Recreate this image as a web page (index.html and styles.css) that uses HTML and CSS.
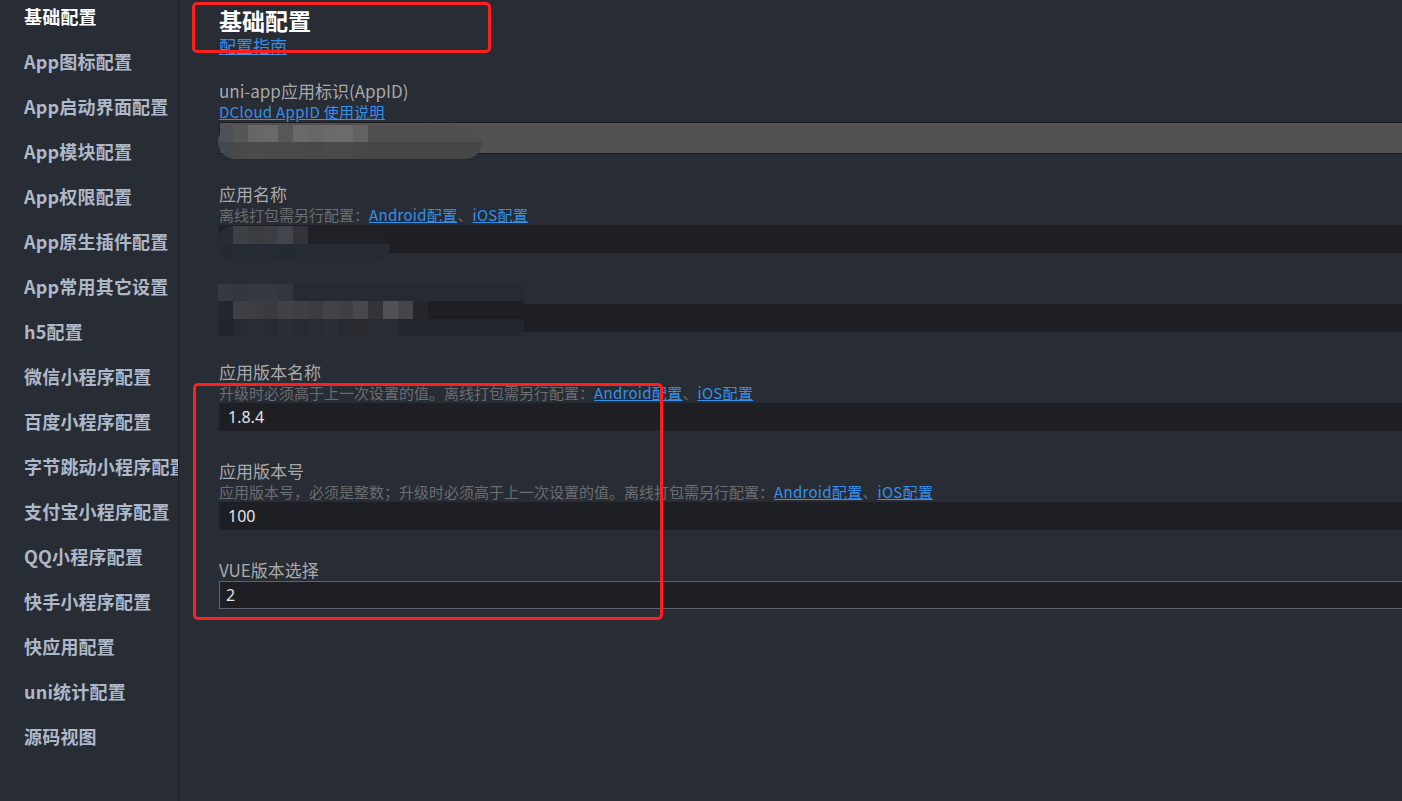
FILE: index.html
```html
<!DOCTYPE html>
<html lang="zh-CN">
<head>
<meta charset="utf-8">
<title>基础配置</title>
<link rel="stylesheet" href="styles.css">
</head>
<body>
<div class="app">
  <nav class="sidebar">
    <ul class="menu">
      <li class="item active">基础配置</li>
      <li class="item">App图标配置</li>
      <li class="item">App启动界面配置</li>
      <li class="item">App模块配置</li>
      <li class="item">App权限配置</li>
      <li class="item">App原生插件配置</li>
      <li class="item">App常用其它设置</li>
      <li class="item">h5配置</li>
      <li class="item">微信小程序配置</li>
      <li class="item">百度小程序配置</li>
      <li class="item">字节跳动小程序配置</li>
      <li class="item">支付宝小程序配置</li>
      <li class="item">QQ小程序配置</li>
      <li class="item">快手小程序配置</li>
      <li class="item">快应用配置</li>
      <li class="item">uni统计配置</li>
      <li class="item">源码视图</li>
    </ul>
  </nav>
  <main class="content">
    <h1 class="title">基础配置</h1>
    <a class="guide" href="#">配置指南</a>

    <div class="field">
      <div class="label">uni-app应用标识(AppID)</div>
      <div class="sub"><a class="link" href="#">DCloud AppID 使用说明</a></div>
      <div class="input input-appid"></div>
    </div>

    <div class="field">
      <div class="label">应用名称</div>
      <div class="sub">离线打包需另行配置：<a class="link" href="#">Android配置</a>、<a class="link" href="#">iOS配置</a></div>
      <div class="input"></div>
    </div>

    <div class="field">
      <div class="label label-desc">应用描述</div>
      <div class="input"></div>
    </div>

    <div class="field">
      <div class="label">应用版本名称</div>
      <div class="sub">升级时必须高于上一次设置的值。离线打包需另行配置：<a class="link" href="#">Android配置</a>、<a class="link" href="#">iOS配置</a></div>
      <div class="input">1.8.4</div>
    </div>

    <div class="field">
      <div class="label">应用版本号</div>
      <div class="sub">应用版本号，必须是整数；升级时必须高于上一次设置的值。离线打包需另行配置：<a class="link" href="#">Android配置</a>、<a class="link" href="#">iOS配置</a></div>
      <div class="input">100</div>
    </div>

    <div class="field">
      <div class="label">VUE版本选择</div>
      <div class="input input-select">2</div>
    </div>
  </main>

  <!-- blur mosaics over private values -->
  <div class="mosaic mosaic-1">
    <div class="row">
      <span class="c" style="background:#4b5059"></span><span class="c" style="background:#575656"></span><span class="c" style="background:#676565"></span><span class="c" style="background:#6b6967"></span><span class="c" style="background:#585656"></span><span class="c" style="background:#6a6868"></span><span class="c" style="background:#676767"></span><span class="c" style="background:#6a6a6a"></span><span class="c" style="background:#6d6b69"></span><span class="c" style="background:#636161"></span><span class="c wide" style="background:#504e4e"></span>
    </div>
    <div class="row">
      <span class="c" style="background:#434750"></span><span class="c" style="background:#4a4949"></span><span class="c" style="background:#4c4b4b"></span><span class="c" style="background:#4a4a4a"></span><span class="c" style="background:#4b4a4a"></span><span class="c" style="background:#4a4949"></span><span class="c" style="background:#484848"></span><span class="c" style="background:#4a4a4a"></span><span class="c" style="background:#4a4949"></span><span class="c" style="background:#484747"></span><span class="c wide" style="background:#474646"></span>
    </div>
  </div>

  <div class="mosaic mosaic-2">
    <div class="row">
      <span class="c" style="background:#272b33"></span><span class="c" style="background:#3e4047"></span><span class="c" style="background:#3b3c40"></span><span class="c" style="background:#3d3e42"></span><span class="c" style="background:#43454c"></span><span class="c" style="background:#333438"></span><span class="c wide" style="background:#1f2127"></span>
    </div>
    <div class="row">
      <span class="c" style="background:#252931"></span><span class="c" style="background:#262a32"></span><span class="c" style="background:#262a32"></span><span class="c" style="background:#262a32"></span><span class="c" style="background:#252931"></span><span class="c" style="background:#262a32"></span><span class="c wide" style="background:#262a32"></span>
    </div>
  </div>

  <div class="mosaic mosaic-3">
    <div class="row">
      <span class="c" style="background:#363941"></span><span class="c" style="background:#33363e"></span><span class="c" style="background:#363941"></span><span class="c" style="background:#363941"></span><span class="c" style="background:#33363e"></span><span class="c wide" style="background:#262a32"></span>
    </div>
    <div class="row">
      <span class="c" style="background:#22262e"></span><span class="c" style="background:#3f4045"></span><span class="c" style="background:#3d3e43"></span><span class="c" style="background:#3a3b40"></span><span class="c" style="background:#414247"></span><span class="c" style="background:#3f4045"></span><span class="c" style="background:#3b3c41"></span><span class="c" style="background:#424348"></span><span class="c" style="background:#3f4045"></span><span class="c" style="background:#47484c"></span><span class="c" style="background:#333438"></span><span class="c" style="background:#505155"></span><span class="c" style="background:#45464b"></span><span class="c" style="background:#25262a"></span><span class="c wide" style="background:#1e1f24"></span>
    </div>
    <div class="row">
      <span class="c" style="background:#22252c"></span><span class="c" style="background:#262a32"></span><span class="c" style="background:#282c34"></span><span class="c" style="background:#262a32"></span><span class="c" style="background:#2a2e36"></span><span class="c" style="background:#262a32"></span><span class="c" style="background:#282c34"></span><span class="c" style="background:#2a2e36"></span><span class="c" style="background:#262a31"></span><span class="c" style="background:#2a2a2e"></span><span class="c" style="background:#282c34"></span><span class="c" style="background:#282c34"></span><span class="c" style="background:#22262e"></span><span class="c" style="background:#22262e"></span><span class="c wide" style="background:#22262e"></span>
    </div>
  </div>

  <!-- annotation boxes -->
  <div class="mark mark-title"></div>
  <div class="mark mark-version"></div>
</div>
</body>
</html>
```

FILE: styles.css
```css
* {
  box-sizing: border-box;
}

html, body {
  margin: 0;
  padding: 0;
  background: #282c34;
  overflow: hidden;
}

body {
  font-family: "Microsoft YaHei", "Noto Sans CJK SC", "Noto Sans", sans-serif;
}

.app {
  position: relative;
  display: flex;
  width: 1402px;
  height: 801px;
  background: #282c34;
  overflow: hidden;
}

/* ---------- sidebar ---------- */
.sidebar {
  flex: 0 0 179px;
  width: 179px;
  height: 100%;
  border-right: 1px solid #1c1f25;
  overflow: hidden;
}

.menu {
  list-style: none;
  margin: -6px 0 0;
  padding: 0;
}

.item {
  height: 45px;
  line-height: 45px;
  padding-left: 24px;
  font-size: 18px;
  font-weight: bold;
  letter-spacing: 0.2px;
  color: #aeb8c8;
  white-space: nowrap;
}

.item.active {
  color: #ffffff;
}

/* ---------- content ---------- */
.content {
  flex: 1 1 auto;
  min-width: 0;
  padding: 6px 0 0 40px;
}

.title {
  margin: 0;
  font-size: 23px;
  line-height: 28px;
  font-weight: bold;
  color: #ffffff;
}

.guide {
  display: block;
  width: max-content;
  margin-top: 1px;
  font-size: 17px;
  line-height: 22px;
  color: #3590ea;
  text-decoration: underline;
}

.field {
  margin-bottom: 29px;
}

.content .guide + .field {
  margin-top: 23px;
}

.label {
  font-size: 17px;
  line-height: 22px;
  color: #a9a9a9;
  white-space: nowrap;
}

.label-desc {
  color: #9a9a9a;
}

.sub {
  font-size: 15px;
  line-height: 20px;
  color: #6b6d70;
  white-space: nowrap;
}

.link {
  color: #3590ea;
  text-decoration: underline;
  letter-spacing: 0.3px;
}

.input {
  height: 28px;
  line-height: 28px;
  margin-right: -4px;
  padding-left: 9px;
  background: #1e1f24;
  color: #e4e4e4;
  font-family: "Microsoft YaHei", "Noto Sans", "Noto Sans CJK SC", sans-serif;
  font-size: 16px;
}

.input-appid {
  height: 32px;
  background: #525050;
  border: 1px solid #1c1d21;
}

.input-select {
  line-height: 26px;
  padding-left: 6px;
  border: 1px solid #5d6270;
}

/* ---------- mosaic blur overlays ---------- */
.mosaic {
  position: absolute;
  display: flex;
  flex-direction: column;
  overflow: hidden;
}

.mosaic .row {
  display: flex;
  flex: 1 1 0;
}

.mosaic .c {
  flex: 0 0 15px;
}

.mosaic .c.wide {
  flex: 1 1 auto;
}

.mosaic-1 {
  left: 218px;
  top: 125px;
  width: 264px;
  height: 34px;
  border-radius: 17px 60px 17px 17px / 17px 17px 17px 17px;
}

.mosaic-2 {
  left: 218px;
  top: 226px;
  width: 172px;
  height: 36px;
  border-radius: 16px 22px 18px 18px;
}

.mosaic-3 {
  left: 218px;
  top: 284px;
  width: 306px;
  height: 52px;
  border-radius: 0 0 8px 0;
}

/* ---------- red annotation boxes ---------- */
.mark {
  position: absolute;
  border: 3px solid #ff1f1f;
  border-radius: 5px;
  pointer-events: none;
}

.mark-title {
  left: 192px;
  top: 2px;
  width: 299px;
  height: 51px;
}

.mark-version {
  left: 193px;
  top: 383px;
  width: 470px;
  height: 237px;
}
```
